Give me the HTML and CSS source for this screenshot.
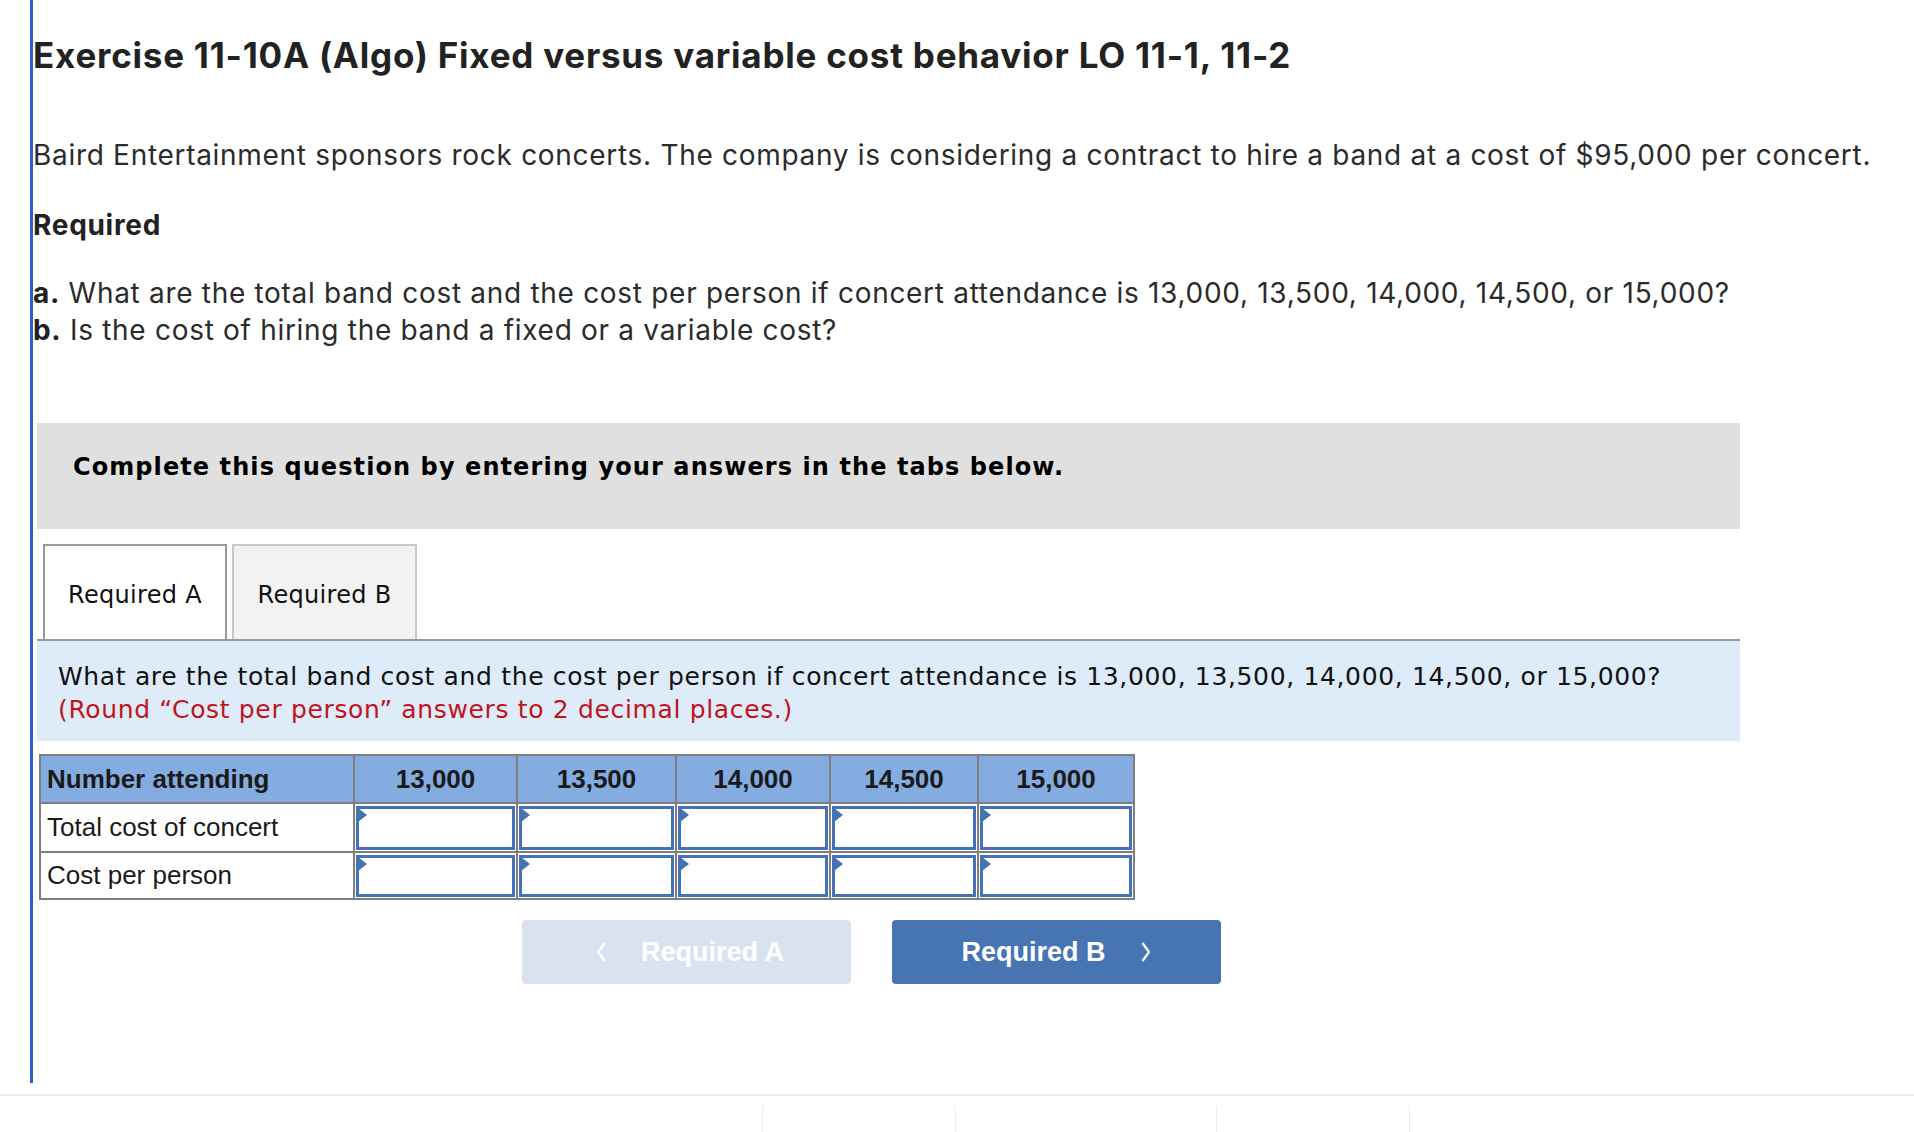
FILE: index.html
```html
<!DOCTYPE html>
<html lang="en">
<head>
<meta charset="utf-8">
<title>Exercise 11-10A (Algo)</title>
<link rel="stylesheet" href="styles.css">
</head>
<body>
<div class="question">
  <h1 class="title">Exercise 11-10A (Algo) Fixed versus variable cost behavior LO 11-1, 11-2</h1>
  <p class="intro">Baird Entertainment sponsors rock concerts. The company is considering a contract to hire a band at a cost of $95,000 per concert.</p>
  <p class="req-head">Required</p>
  <p class="req-list"><b>a.</b> What are the total band cost and the cost per person if concert attendance is 13,000, 13,500, 14,000, 14,500, or 15,000?<br><b>b.</b> Is the cost of hiring the band a fixed or a variable cost?</p>

  <div class="exercise">
    <div class="instruction">Complete this question by entering your answers in the tabs below.</div>
    <div class="tabbar">
      <div class="tab tab-active">Required A</div>
      <div class="tab">Required B</div>
    </div>
    <div class="prompt">What are the total band cost and the cost per person if concert attendance is 13,000, 13,500, 14,000, 14,500, or 15,000?<br><span class="hint">(Round “Cost per person” answers to 2 decimal places.)</span></div>

    <table class="grid">
      <colgroup>
        <col class="c1"><col class="c2"><col class="c3"><col class="c4"><col class="c5"><col class="c6">
      </colgroup>
      <thead>
        <tr class="head-row">
          <th class="label">Number attending</th>
          <th>13,000</th>
          <th>13,500</th>
          <th>14,000</th>
          <th>14,500</th>
          <th>15,000</th>
        </tr>
      </thead>
      <tbody>
        <tr class="row1">
          <td class="label">Total cost of concert</td>
          <td class="cell"><div class="inp"></div></td>
          <td class="cell"><div class="inp"></div></td>
          <td class="cell"><div class="inp"></div></td>
          <td class="cell"><div class="inp"></div></td>
          <td class="cell"><div class="inp"></div></td>
        </tr>
        <tr class="row2">
          <td class="label">Cost per person</td>
          <td class="cell"><div class="inp"></div></td>
          <td class="cell"><div class="inp"></div></td>
          <td class="cell"><div class="inp"></div></td>
          <td class="cell"><div class="inp"></div></td>
          <td class="cell"><div class="inp"></div></td>
        </tr>
      </tbody>
    </table>

    <div class="nav">
      <div class="btn btn-prev">
        <svg class="chev" width="12" height="22" viewBox="0 0 12 22"><polyline points="9.5,2 3,11 9.5,20" fill="none" stroke="#fff" stroke-width="2.2"/></svg>
        <span>Required A</span>
      </div>
      <div class="btn btn-next">
        <span>Required B</span>
        <svg class="chev" width="12" height="22" viewBox="0 0 12 22"><polyline points="2.5,2 9,11 2.5,20" fill="none" stroke="#fff" stroke-width="2.2"/></svg>
      </div>
    </div>
  </div>
</div>
<div class="footer">
  <div class="footer-cols">
    <div class="fc fc-first"></div>
    <div class="fc"></div>
    <div class="fc"></div>
    <div class="fc"></div>
    <div class="fc fc-last"></div>
  </div>
</div>
</body>
</html>
```

FILE: styles.css
```css
* { box-sizing: border-box; }
html, body { margin: 0; padding: 0; background: #fff; }
body {
  width: 1914px;
  height: 1132px;
  overflow: hidden;
  font-family: Inter, Lato, "Open Sans", sans-serif;
  color: #2b2b2b;
}

.question {
  margin-left: 30px;
  border-left: 3px solid #2c5fcc;
  height: 1083px;
  padding-top: 35px;
}

.title {
  margin: 0;
  font-size: 35px;
  letter-spacing: 0.77px;
  line-height: 40px;
  font-weight: 700;
  color: #222;
}

.intro, .req-head, .req-list {
  font-size: 28px;
  letter-spacing: 0.7px;
  line-height: 37px;
}
.intro { margin: 62px 0 0; }
.req-head { margin: 33px 0 0; font-weight: 700; color: #222; }
.req-list { margin: 31px 0 0; }
.req-list b { color: #222; }

.exercise {
  margin: 74px 0 0 4px;
  width: 1703px;
}

.instruction {
  height: 106px;
  background: #e0e0e0;
  padding: 29px 0 0 36px;
  font-family: "DejaVu Sans", Verdana, sans-serif;
  font-weight: 700;
  font-size: 24px;
  letter-spacing: 1.08px;
  line-height: 30px;
  color: #000;
}

.tabbar {
  display: flex;
  gap: 5px;
  margin-top: 15px;
  padding-left: 6px;
  height: 97px;
  border-bottom: 2px solid #999;
}
.tab {
  width: 185px;
  height: 95px;
  display: flex;
  align-items: center;
  justify-content: center;
  padding-top: 4px;
  font-family: "DejaVu Sans", Verdana, sans-serif;
  font-size: 24px;
  letter-spacing: 0.3px;
  color: #111;
  background: #f2f2f2;
  border: 2px solid #c8c8c8;
  border-bottom: none;
}
.tab-active {
  width: 184px;
  background: #fff;
  border-color: #999;
}

.prompt {
  background: #deebf8;
  padding: 19px 21px 15px;
  font-family: "DejaVu Sans", Verdana, sans-serif;
  font-size: 25px;
  letter-spacing: 0.65px;
  line-height: 33px;
  color: #111;
}
.hint { color: #c0141c; }

.grid {
  margin: 13px 0 0 2px;
  border-collapse: collapse;
  table-layout: fixed;
  width: 1094px;
  font-family: "Liberation Sans", Arial, sans-serif;
  font-size: 26px;
  color: #1a1a1a;
  border: 2px solid #7f7f7f;
}
.c1 { width: 314px; }
.c2 { width: 163px; }
.c3 { width: 159px; }
.c4 { width: 154px; }
.c5 { width: 148px; }
.c6 { width: 156px; }

.grid th, .grid td {
  border: 2px solid #7f7f7f;
  padding: 0;
}
.head-row { height: 48px; }
.head-row th {
  background: #84ace0;
  font-weight: 700;
  text-align: center;
}
.grid .label {
  text-align: left;
  padding-left: 6px;
}
.row1 { height: 49px; }
.row2 { height: 47px; }
.grid td.cell {
  padding: 1px;
}
.inp {
  position: relative;
  height: 44px;
  border: 3px solid #4472b4;
  background: #fff;
}
.row2 .inp { height: 42px; }
.inp::before {
  content: "";
  position: absolute;
  left: -1px;
  top: -1px;
  border-top: 7px solid transparent;
  border-bottom: 7px solid transparent;
  border-left: 9px solid #4472b4;
}

.nav {
  display: flex;
  gap: 41px;
  margin: 20px 0 0 485px;
}
.btn {
  width: 329px;
  height: 64px;
  border-radius: 4px;
  display: flex;
  align-items: center;
  justify-content: center;
  gap: 34px;
  font-family: "Liberation Sans", Arial, sans-serif;
  font-weight: 700;
  font-size: 27px;
  color: #fff;
}
.btn-prev { background: #d9e3ef; padding-left: 6px; }
.btn-next { background: #4774b3; }
.chev { display: block; }

.footer {
  margin-top: 11px;
  border-top: 2px solid #efefef;
}
.footer-cols {
  display: grid;
  grid-template-columns: 762px 193px 261px 193px 1fr;
  margin-top: 10px;
  height: 30px;
}
.fc { border-left: 1px solid #ececec; }
.fc-first { border-left: none; }
```
